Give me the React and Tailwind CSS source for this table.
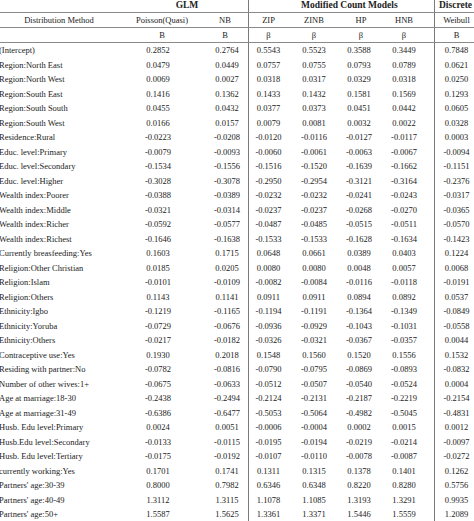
import React from "react";

const rows = [
  ["(Intercept)", "0.2852", "0.2764", "0.5543", "0.5523", "0.3588", "0.3449", "0.7848"],
  ["Region:North East", "0.0479", "0.0449", "0.0757", "0.0755", "0.0793", "0.0789", "0.0621"],
  ["Region:North West", "0.0069", "0.0027", "0.0318", "0.0317", "0.0329", "0.0318", "0.0250"],
  ["Region:South East", "0.1416", "0.1362", "0.1433", "0.1432", "0.1581", "0.1569", "0.1293"],
  ["Region:South South", "0.0455", "0.0432", "0.0377", "0.0373", "0.0451", "0.0442", "0.0605"],
  ["Region:South West", "0.0166", "0.0157", "0.0079", "0.0081", "0.0032", "0.0022", "0.0328"],
  ["Residence:Rural", "-0.0223", "-0.0208", "-0.0120", "-0.0116", "-0.0127", "-0.0117", "0.0003"],
  ["Educ. level:Primary", "-0.0079", "-0.0093", "-0.0060", "-0.0061", "-0.0063", "-0.0067", "-0.0094"],
  ["Educ. level:Secondary", "-0.1534", "-0.1556", "-0.1516", "-0.1520", "-0.1639", "-0.1662", "-0.1151"],
  ["Educ. level:Higher", "-0.3028", "-0.3078", "-0.2950", "-0.2954", "-0.3121", "-0.3164", "-0.2376"],
  ["Wealth index:Poorer", "-0.0388", "-0.0389", "-0.0232", "-0.0232", "-0.0241", "-0.0243", "-0.0317"],
  ["Wealth index:Middle", "-0.0321", "-0.0314", "-0.0237", "-0.0237", "-0.0268", "-0.0270", "-0.0365"],
  ["Wealth index:Richer", "-0.0592", "-0.0577", "-0.0487", "-0.0485", "-0.0515", "-0.0511", "-0.0570"],
  ["Wealth index:Richest", "-0.1646", "-0.1638", "-0.1533", "-0.1533", "-0.1628", "-0.1634", "-0.1423"],
  ["Currently breasfeeding:Yes", "0.1603", "0.1715", "0.0648", "0.0661", "0.0389", "0.0403", "0.1224"],
  ["Religion:Other Christian", "0.0185", "0.0205", "0.0080", "0.0080", "0.0048", "0.0057", "0.0068"],
  ["Religion:Islam", "-0.0101", "-0.0109", "-0.0082", "-0.0084", "-0.0116", "-0.0118", "-0.0191"],
  ["Religion:Others", "0.1143", "0.1141", "0.0911", "0.0911", "0.0894", "0.0892", "0.0537"],
  ["Ethnicity:Igbo", "-0.1219", "-0.1165", "-0.1194", "-0.1191", "-0.1364", "-0.1349", "-0.0849"],
  ["Ethnicity:Yoruba", "-0.0729", "-0.0676", "-0.0936", "-0.0929", "-0.1043", "-0.1031", "-0.0558"],
  ["Ethnicity:Others", "-0.0217", "-0.0182", "-0.0326", "-0.0321", "-0.0367", "-0.0357", "0.0044"],
  ["Contraceptive use:Yes", "0.1930", "0.2018", "0.1548", "0.1560", "0.1520", "0.1556", "0.1532"],
  ["Residing with partner:No", "-0.0782", "-0.0816", "-0.0790", "-0.0795", "-0.0869", "-0.0893", "-0.0832"],
  ["Number of other wives:1+", "-0.0675", "-0.0633", "-0.0512", "-0.0507", "-0.0540", "-0.0524", "0.0004"],
  ["Age at marriage:18-30", "-0.2438", "-0.2494", "-0.2124", "-0.2131", "-0.2187", "-0.2219", "-0.2154"],
  ["Age at marriage:31-49", "-0.6386", "-0.6477", "-0.5053", "-0.5064", "-0.4982", "-0.5045", "-0.4831"],
  ["Husb. Edu level:Primary", "0.0024", "0.0051", "-0.0006", "-0.0004", "0.0002", "0.0015", "0.0012"],
  ["Husb.Edu level:Secondary", "-0.0133", "-0.0115", "-0.0195", "-0.0194", "-0.0219", "-0.0214", "-0.0097"],
  ["Husb. Edu level:Tertiary", "-0.0175", "-0.0192", "-0.0107", "-0.0110", "-0.0078", "-0.0087", "-0.0272"],
  ["currently working:Yes", "0.1701", "0.1741", "0.1311", "0.1315", "0.1378", "0.1401", "0.1262"],
  ["Partners' age:30-39", "0.8000", "0.7982", "0.6346", "0.6348", "0.8220", "0.8280", "0.5756"],
  ["Partners' age:40-49", "1.3112", "1.3115", "1.1078", "1.1085", "1.3193", "1.3291", "0.9935"],
  ["Partners' age:50+", "1.5587", "1.5625", "1.3361", "1.3371", "1.5446", "1.5559", "1.2089"],
];

const cols = "grid grid-cols-[118px_88px_42px_40px_52px_38px_56px_44px] w-[478px]";
const vl = "border-l border-[#7a7a7a]";

export default function App() {
  return (
    <div
      className="w-[474px] h-[521px] overflow-hidden bg-white text-[#222] text-[8.5px] leading-none"
      style={{ fontFamily: '"Liberation Serif", "Times New Roman", serif' }}
    >
      <div className={`${cols} h-[13px] border-b border-[#8a8a8a] items-center font-bold text-[9.5px]`}>
        <div />
        <div className="col-span-2 text-center pl-[8px]">GLM</div>
        <div className={`col-span-4 ${vl} h-full flex items-center pl-[52px] whitespace-nowrap`}>Modified Count Models</div>
        <div className={`${vl} h-full flex items-center pl-[4px] whitespace-nowrap`}>Discrete</div>
      </div>
      <div className={`${cols} h-[15px] border-b border-[#8a8a8a] items-center`}>
        <div className="text-center">Distribution Method</div>
        <div className="text-center">Poisson(Quasi)</div>
        <div className="text-center pr-[4px]">NB</div>
        <div className={`${vl} h-full flex items-center justify-center`}>ZIP</div>
        <div className="text-center">ZINB</div>
        <div className="text-center pl-[4px]">HP</div>
        <div className="text-center pr-[4px]">HNB</div>
        <div className={`${vl} h-full flex items-center justify-center`}>Weibull</div>
      </div>
      <div className={`${cols} h-[15px] border-b border-[#8a8a8a] items-center`}>
        <div />
        <div className="text-center">B</div>
        <div className="text-center pr-[4px]">B</div>
        <div className={`${vl} h-full flex items-center justify-center`}>β</div>
        <div className="text-center">β</div>
        <div className="text-center pl-[4px]">β</div>
        <div className="text-center pr-[4px]">β</div>
        <div className={`${vl} h-full flex items-center justify-center`}>B</div>
      </div>
      {rows.map((r, i) => (
        <div key={i} className={`${cols} h-[14.5px] items-center`}>
          <div className="whitespace-nowrap -ml-[1px]">{r[0]}</div>
          <div className="text-center pr-[8px]">{r[1]}</div>
          <div className="text-center">{r[2]}</div>
          <div className={`${vl} h-full flex items-center justify-center`}>{r[3]}</div>
          <div className="text-center">{r[4]}</div>
          <div className="text-center">{r[5]}</div>
          <div className="text-center pr-[4px]">{r[6]}</div>
          <div className={`${vl} h-full flex items-center justify-center`}>{r[7]}</div>
        </div>
      ))}
    </div>
  );
}
